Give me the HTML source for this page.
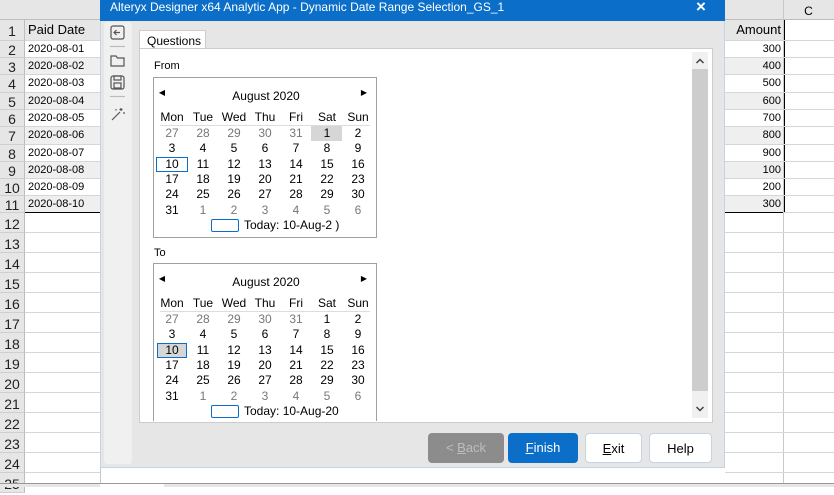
<!DOCTYPE html>
<html><head><style>
*{margin:0;padding:0;box-sizing:border-box}
body{width:834px;height:487px;overflow:hidden;background:#fff;font-family:"Liberation Sans",sans-serif;position:relative}
.a{position:absolute}
.rh{position:absolute;left:0;width:25px;background:#e6e6e6;border-bottom:1px solid #cfcfcf;border-right:1px solid #bdbdbd;font-size:14px;text-align:center;color:#222}
.cell{position:absolute;border-bottom:1px solid #d6d6d6;font-size:11px;color:#000;padding-left:3px}
.amt{position:absolute;left:725px;width:58px;text-align:right;padding-right:2px;font-size:11px;border-bottom:1px solid #d6d6d6}
.cc{position:absolute;left:783px;width:51px;border-bottom:1px solid #d6d6d6}
.cal{position:absolute;border:1px solid #a0a0a0;background:#fff;width:224px;font-size:12px;color:#000}
.cal span{position:absolute;width:30px;text-align:center}
.g{color:#777}
.btn{position:absolute;top:433px;height:30px;border-radius:4px;font-size:13px;text-align:center;line-height:29px}
</style></head><body>
<div class="a" style="left:0;top:0;width:834px;height:20px;background:#e6e6e6;border-bottom:1px solid #bdbdbd"></div>
<div class="a" style="left:783px;top:0;width:1px;height:20px;background:#c8c8c8"></div>
<div class="a" style="left:783px;top:4px;width:51px;text-align:center;font-size:12px">C</div>
<div class="a" style="left:100px;top:0;width:1px;height:487px;background:#c8c8c8"></div>
<div class="a" style="left:783px;top:20px;width:2px;height:192px;background:#000"></div>
<div class="a" style="left:783px;top:20px;width:1px;height:467px;background:#c8c8c8"></div>

<div class="rh" style="top:20px;height:21px;line-height:22px">1</div>
<div class="cell" style="left:25px;top:20px;width:75px;height:21px;background:#e6e6e6;font-size:13px;line-height:20px">Paid Date</div>
<div class="amt" style="top:20px;height:21px;background:#e6e6e6;font-size:13px;line-height:20px">Amount</div>
<div class="cc" style="top:20px;height:21px"></div>

<div class="rh" style="top:41px;height:17px;line-height:18px">2</div><div class="cell" style="left:25px;top:41px;width:75px;height:17px;line-height:16px">2020-08-01</div><div class="amt" style="top:41px;height:17px;line-height:16px">300</div><div class="cc" style="top:41px;height:17px"></div>
<div class="rh" style="top:58px;height:17px;line-height:18px">3</div><div class="cell" style="left:25px;top:58px;width:75px;height:17px;line-height:16px;background:#efefef">2020-08-02</div><div class="amt" style="top:58px;height:17px;line-height:16px;background:#efefef">400</div><div class="cc" style="top:58px;height:17px"></div>
<div class="rh" style="top:75px;height:18px;line-height:19px">4</div><div class="cell" style="left:25px;top:75px;width:75px;height:18px;line-height:17px">2020-08-03</div><div class="amt" style="top:75px;height:18px;line-height:17px">500</div><div class="cc" style="top:75px;height:18px"></div>
<div class="rh" style="top:93px;height:17px;line-height:18px">5</div><div class="cell" style="left:25px;top:93px;width:75px;height:17px;line-height:16px;background:#efefef">2020-08-04</div><div class="amt" style="top:93px;height:17px;line-height:16px;background:#efefef">600</div><div class="cc" style="top:93px;height:17px"></div>
<div class="rh" style="top:110px;height:17px;line-height:18px">6</div><div class="cell" style="left:25px;top:110px;width:75px;height:17px;line-height:16px">2020-08-05</div><div class="amt" style="top:110px;height:17px;line-height:16px">700</div><div class="cc" style="top:110px;height:17px"></div>
<div class="rh" style="top:127px;height:18px;line-height:19px">7</div><div class="cell" style="left:25px;top:127px;width:75px;height:18px;line-height:17px;background:#efefef">2020-08-06</div><div class="amt" style="top:127px;height:18px;line-height:17px;background:#efefef">800</div><div class="cc" style="top:127px;height:18px"></div>
<div class="rh" style="top:145px;height:17px;line-height:18px">8</div><div class="cell" style="left:25px;top:145px;width:75px;height:17px;line-height:16px">2020-08-07</div><div class="amt" style="top:145px;height:17px;line-height:16px">900</div><div class="cc" style="top:145px;height:17px"></div>
<div class="rh" style="top:162px;height:17px;line-height:18px">9</div><div class="cell" style="left:25px;top:162px;width:75px;height:17px;line-height:16px;background:#efefef">2020-08-08</div><div class="amt" style="top:162px;height:17px;line-height:16px;background:#efefef">100</div><div class="cc" style="top:162px;height:17px"></div>
<div class="rh" style="top:179px;height:17px;line-height:18px">10</div><div class="cell" style="left:25px;top:179px;width:75px;height:17px;line-height:16px">2020-08-09</div><div class="amt" style="top:179px;height:17px;line-height:16px">200</div><div class="cc" style="top:179px;height:17px"></div>
<div class="rh" style="top:196px;height:17px;line-height:18px">11</div><div class="cell" style="left:25px;top:196px;width:75px;height:17px;line-height:16px;background:#efefef;border-bottom:1px solid #000">2020-08-10</div><div class="amt" style="top:196px;height:17px;line-height:16px;background:#efefef;border-bottom:1px solid #000">300</div><div class="cc" style="top:196px;height:17px"></div>

<div class="rh" style="top:213px;height:20px;line-height:22px">12</div><div class="cell" style="left:25px;top:213px;width:75px;height:20px"></div><div class="amt" style="top:213px;height:20px"></div><div class="cc" style="top:213px;height:20px"></div>
<div class="rh" style="top:233px;height:20px;line-height:22px">13</div><div class="cell" style="left:25px;top:233px;width:75px;height:20px"></div><div class="amt" style="top:233px;height:20px"></div><div class="cc" style="top:233px;height:20px"></div>
<div class="rh" style="top:253px;height:20px;line-height:22px">14</div><div class="cell" style="left:25px;top:253px;width:75px;height:20px"></div><div class="amt" style="top:253px;height:20px"></div><div class="cc" style="top:253px;height:20px"></div>
<div class="rh" style="top:273px;height:20px;line-height:22px">15</div><div class="cell" style="left:25px;top:273px;width:75px;height:20px"></div><div class="amt" style="top:273px;height:20px"></div><div class="cc" style="top:273px;height:20px"></div>
<div class="rh" style="top:293px;height:20px;line-height:22px">16</div><div class="cell" style="left:25px;top:293px;width:75px;height:20px"></div><div class="amt" style="top:293px;height:20px"></div><div class="cc" style="top:293px;height:20px"></div>
<div class="rh" style="top:313px;height:20px;line-height:22px">17</div><div class="cell" style="left:25px;top:313px;width:75px;height:20px"></div><div class="amt" style="top:313px;height:20px"></div><div class="cc" style="top:313px;height:20px"></div>
<div class="rh" style="top:333px;height:20px;line-height:22px">18</div><div class="cell" style="left:25px;top:333px;width:75px;height:20px"></div><div class="amt" style="top:333px;height:20px"></div><div class="cc" style="top:333px;height:20px"></div>
<div class="rh" style="top:353px;height:20px;line-height:22px">19</div><div class="cell" style="left:25px;top:353px;width:75px;height:20px"></div><div class="amt" style="top:353px;height:20px"></div><div class="cc" style="top:353px;height:20px"></div>
<div class="rh" style="top:373px;height:20px;line-height:22px">20</div><div class="cell" style="left:25px;top:373px;width:75px;height:20px"></div><div class="amt" style="top:373px;height:20px"></div><div class="cc" style="top:373px;height:20px"></div>
<div class="rh" style="top:393px;height:20px;line-height:22px">21</div><div class="cell" style="left:25px;top:393px;width:75px;height:20px"></div><div class="amt" style="top:393px;height:20px"></div><div class="cc" style="top:393px;height:20px"></div>
<div class="rh" style="top:413px;height:20px;line-height:22px">22</div><div class="cell" style="left:25px;top:413px;width:75px;height:20px"></div><div class="amt" style="top:413px;height:20px"></div><div class="cc" style="top:413px;height:20px"></div>
<div class="rh" style="top:433px;height:20px;line-height:22px">23</div><div class="cell" style="left:25px;top:433px;width:75px;height:20px"></div><div class="amt" style="top:433px;height:20px"></div><div class="cc" style="top:433px;height:20px"></div>
<div class="rh" style="top:453px;height:20px;line-height:22px">24</div><div class="cell" style="left:25px;top:453px;width:75px;height:20px"></div><div class="amt" style="top:453px;height:20px"></div><div class="cc" style="top:453px;height:20px"></div>
<div class="rh" style="top:473px;height:20px;line-height:22px">25</div>
<div class="a" style="left:0;top:483px;width:834px;height:4px;background:#e6e6e6;border-top:1px solid #999"></div>
<div class="a" style="left:100px;top:483px;width:64px;height:4px;background:#fff;border-top:1px solid #999"></div>

<div class="a" style="left:100px;top:0;width:625px;height:468px;background:#e6e6e6;border:1px solid #c6d3e3"></div>
<div class="a" style="left:100px;top:0;width:625px;height:21px;background:#0b6fc9;color:#fff;font-size:12px;line-height:12px;padding:1px 0 0 10px">Alteryx Designer x64 Analytic App - Dynamic Date Range Selection_GS_1</div>
<div class="a" style="left:696px;top:-3px;color:#fff;font-size:17px;font-weight:bold">×</div>
<div class="a" style="left:104px;top:22px;width:28px;height:442px;background:#f0f0f0;border-radius:3px"></div>
<svg class="a" style="left:108px;top:24px" width="20" height="100" viewBox="0 0 20 100" fill="none" stroke="#555" stroke-width="1.2">
<rect x="3" y="2" width="13" height="13" rx="2"/><path d="M12 8.5H6M8.5 6L6 8.5L8.5 11"/>
<path d="M2 22.5h15" stroke="#bbb"/>
<path d="M3 32h5l1.5 2H16v8H3z"/>
<rect x="3" y="52" width="13" height="13" rx="2"/><rect x="6" y="52" width="7" height="4"/><rect x="6" y="59" width="7" height="5"/>
<path d="M2 72.5h15" stroke="#bbb"/>
<path d="M4 96l8-8M13 84v3M11.5 85.5h3M16 88v2M8 85v1.5"/>
</svg>
<div class="a" style="left:139px;top:30px;width:67px;height:19px;background:#fff;border:1px solid #ccc;border-bottom:none;font-size:12px;padding:3px 0 0 7px">Questions</div>
<div class="a" style="left:139px;top:48px;width:574px;height:375px;background:#fff;border:1px solid #ccc"></div>
<div class="a" style="left:692px;top:52px;width:16px;height:366px;background:#f0f0f0"></div>
<div class="a" style="left:692px;top:69px;width:16px;height:322px;background:#cdcdcd"></div>
<svg class="a" style="left:692px;top:52px" width="16" height="366" fill="none" stroke="#444" stroke-width="1.5"><path d="M4.5 11L8 7.5L11.5 11"/><path d="M4.5 355L8 358.5L11.5 355"/></svg>

<div class="a" style="left:154px;top:60px;font-size:11px">From</div>
<div class="cal" style="left:153px;top:77px;height:161px">
<span style="left:3px;top:10px;font-size:8px;width:10px">◀</span>
<span style="left:52px;top:11px;width:120px">August 2020</span>
<span style="left:205px;top:10px;font-size:8px;width:10px">▶</span>
<div style="position:absolute;left:3px;top:26px;width:212px;font-size:12px">
<span style="left:0;top:6px">Mon</span><span style="left:31px;top:6px">Tue</span><span style="left:62px;top:6px">Wed</span><span style="left:93px;top:6px">Thu</span><span style="left:124px;top:6px">Fri</span><span style="left:155px;top:6px">Sat</span><span style="left:186px;top:6px">Sun</span>
</div>
<div style="position:absolute;left:6px;top:47px;width:210px;height:1px;background:#ddd"></div>
<div style="position:absolute;left:157px;top:48px;width:31px;height:15px;background:#d6d6d6"></div>
<div style="position:absolute;left:2px;top:79px;width:32px;height:15px;border:1px solid #0b6fc9"></div>
<div style="position:absolute;left:3px;top:48px;width:212px;line-height:15.3px">
<span class="g" style="left:0;top:0">27</span><span class="g" style="left:31px;top:0">28</span><span class="g" style="left:62px;top:0">29</span><span class="g" style="left:93px;top:0">30</span><span class="g" style="left:124px;top:0">31</span><span style="left:155px;top:0">1</span><span style="left:186px;top:0">2</span>
<span style="left:0;top:15px">3</span><span style="left:31px;top:15px">4</span><span style="left:62px;top:15px">5</span><span style="left:93px;top:15px">6</span><span style="left:124px;top:15px">7</span><span style="left:155px;top:15px">8</span><span style="left:186px;top:15px">9</span>
<span style="left:0;top:31px">10</span><span style="left:31px;top:31px">11</span><span style="left:62px;top:31px">12</span><span style="left:93px;top:31px">13</span><span style="left:124px;top:31px">14</span><span style="left:155px;top:31px">15</span><span style="left:186px;top:31px">16</span>
<span style="left:0;top:46px">17</span><span style="left:31px;top:46px">18</span><span style="left:62px;top:46px">19</span><span style="left:93px;top:46px">20</span><span style="left:124px;top:46px">21</span><span style="left:155px;top:46px">22</span><span style="left:186px;top:46px">23</span>
<span style="left:0;top:61px">24</span><span style="left:31px;top:61px">25</span><span style="left:62px;top:61px">26</span><span style="left:93px;top:61px">27</span><span style="left:124px;top:61px">28</span><span style="left:155px;top:61px">29</span><span style="left:186px;top:61px">30</span>
<span style="left:0;top:77px">31</span><span class="g" style="left:31px;top:77px">1</span><span class="g" style="left:62px;top:77px">2</span><span class="g" style="left:93px;top:77px">3</span><span class="g" style="left:124px;top:77px">4</span><span class="g" style="left:155px;top:77px">5</span><span class="g" style="left:186px;top:77px">6</span>
</div>
<div style="position:absolute;left:57px;top:141px;width:28px;height:13px;border:1px solid #0b6fc9;border-radius:2px"></div>
<div style="position:absolute;left:90px;top:140px">Today: 10-Aug-2 )</div>
</div>

<div class="a" style="left:154px;top:247px;font-size:11px">To</div>
<div class="cal" style="left:153px;top:263px;height:158px;border-bottom:none">
<span style="left:3px;top:10px;font-size:8px;width:10px">◀</span>
<span style="left:52px;top:11px;width:120px">August 2020</span>
<span style="left:205px;top:10px;font-size:8px;width:10px">▶</span>
<div style="position:absolute;left:3px;top:26px;width:212px;font-size:12px">
<span style="left:0;top:6px">Mon</span><span style="left:31px;top:6px">Tue</span><span style="left:62px;top:6px">Wed</span><span style="left:93px;top:6px">Thu</span><span style="left:124px;top:6px">Fri</span><span style="left:155px;top:6px">Sat</span><span style="left:186px;top:6px">Sun</span>
</div>
<div style="position:absolute;left:6px;top:47px;width:210px;height:1px;background:#ddd"></div>
<div style="position:absolute;left:3px;top:79px;width:30px;height:15px;background:#d6d6d6;border:1px solid #0b6fc9"></div>
<div style="position:absolute;left:3px;top:48px;width:212px;line-height:15.3px">
<span class="g" style="left:0;top:0">27</span><span class="g" style="left:31px;top:0">28</span><span class="g" style="left:62px;top:0">29</span><span class="g" style="left:93px;top:0">30</span><span class="g" style="left:124px;top:0">31</span><span style="left:155px;top:0">1</span><span style="left:186px;top:0">2</span>
<span style="left:0;top:15px">3</span><span style="left:31px;top:15px">4</span><span style="left:62px;top:15px">5</span><span style="left:93px;top:15px">6</span><span style="left:124px;top:15px">7</span><span style="left:155px;top:15px">8</span><span style="left:186px;top:15px">9</span>
<span style="left:0;top:31px">10</span><span style="left:31px;top:31px">11</span><span style="left:62px;top:31px">12</span><span style="left:93px;top:31px">13</span><span style="left:124px;top:31px">14</span><span style="left:155px;top:31px">15</span><span style="left:186px;top:31px">16</span>
<span style="left:0;top:46px">17</span><span style="left:31px;top:46px">18</span><span style="left:62px;top:46px">19</span><span style="left:93px;top:46px">20</span><span style="left:124px;top:46px">21</span><span style="left:155px;top:46px">22</span><span style="left:186px;top:46px">23</span>
<span style="left:0;top:61px">24</span><span style="left:31px;top:61px">25</span><span style="left:62px;top:61px">26</span><span style="left:93px;top:61px">27</span><span style="left:124px;top:61px">28</span><span style="left:155px;top:61px">29</span><span style="left:186px;top:61px">30</span>
<span style="left:0;top:77px">31</span><span class="g" style="left:31px;top:77px">1</span><span class="g" style="left:62px;top:77px">2</span><span class="g" style="left:93px;top:77px">3</span><span class="g" style="left:124px;top:77px">4</span><span class="g" style="left:155px;top:77px">5</span><span class="g" style="left:186px;top:77px">6</span>
</div>
<div style="position:absolute;left:57px;top:141px;width:28px;height:13px;border:1px solid #0b6fc9;border-radius:2px"></div>
<div style="position:absolute;left:90px;top:140px">Today: 10-Aug-20</div>
</div>

<div class="btn" style="left:428px;width:76px;background:#8c8c8c;color:#bdbdbd">&lt; <u>B</u>ack</div>
<div class="btn" style="left:508px;width:70px;background:#0b6fc9;color:#fff"><u>F</u>inish</div>
<div class="btn" style="left:585px;width:57px;background:#fff;border:1px solid #c6d3e3"><u>E</u>xit</div>
<div class="btn" style="left:649px;width:63px;background:#fff;border:1px solid #c6d3e3">Help</div>
</body></html>
